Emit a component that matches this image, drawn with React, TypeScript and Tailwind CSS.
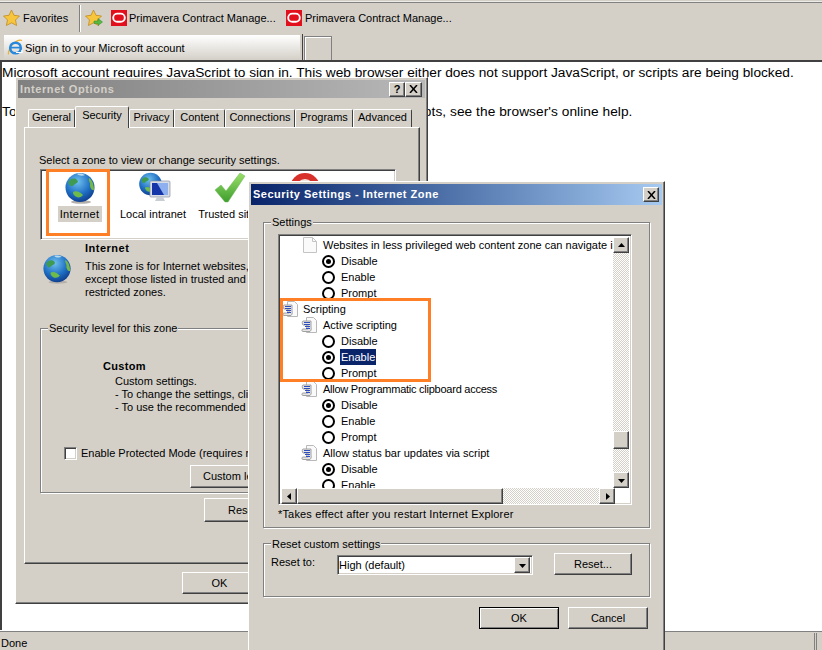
import React from "react";

const raised = "bg-[#d4d0c8] border border-t-white border-l-white border-r-[#404040] border-b-[#404040] shadow-[inset_-1px_-1px_0_#808080]";
const etched = "border border-[#808080] shadow-[1px_1px_0_#fff,inset_1px_1px_0_#fff]";
const sunken = "border border-t-[#808080] border-l-[#808080] border-r-white border-b-white shadow-[inset_1px_1px_0_#404040,inset_-1px_-1px_0_#d4d0c8]";
const hatch = "bg-[repeating-conic-gradient(#d4d0c8_0_25%,#ffffff_0_50%)] bg-[length:2px_2px]";

function Globe({ size = 32 }: { size?: number }) {
  return (
    <svg width={size} height={size} viewBox="0 0 32 32">
      <defs>
        <radialGradient id="glb" cx="0.42" cy="0.3" r="0.8">
          <stop offset="0" stopColor="#6fc0ee" />
          <stop offset="0.55" stopColor="#1f6fc4" />
          <stop offset="1" stopColor="#0b2f7e" />
        </radialGradient>
      </defs>
      <ellipse cx="17" cy="30" rx="10" ry="1.7" fill="#b5b1aa" />
      <circle cx="16" cy="15.5" r="14.5" fill="url(#glb)" />
      <path d="M5 9 C8 6 11 6 13 8 C15 10 13 11 11 12 C9 13 9 15 7 14 C5 13 4 11 5 9Z" fill="#3f9a52" />
      <path d="M9 20 C12 18 16 20 19 23 C17 26 13 26 11 24 C10 23 9 22 9 20Z" fill="#6fbb4a" />
      <path d="M25 6 C28 8 30 12 30 18 C28 19 26 16 26 13 C27 11 24 9 25 6Z" fill="#76b848" />
      <path d="M13 2 C16 1 19 2 21 3 C19 4 15 4 13 2Z" fill="#bcdcee" />
    </svg>
  );
}

function Intranet() {
  return (
    <svg width="34" height="34" viewBox="0 0 34 34">
      <g transform="scale(0.78)"><circle cx="16" cy="15.5" r="14.5" fill="url(#glb)" />
        <path d="M5 9 C8 6 11 6 13 8 C15 10 13 11 11 12 C9 13 9 15 7 14 C5 13 4 11 5 9Z" fill="#3f9a52" />
        <path d="M9 20 C12 18 16 20 19 23 C17 26 13 26 11 24 C10 23 9 22 9 20Z" fill="#6fbb4a" />
      </g>
      <rect x="12" y="9" width="20" height="16" rx="1" fill="#d8dde6" stroke="#8b93a3" strokeWidth="0.7" />
      <rect x="14" y="11" width="16" height="12" fill="#1436a8" />
      <path d="M19 11 H30 V23 H26Z" fill="#8fb0ee" />
      <path d="M19 25 H25 L27 29 H17Z" fill="#c9cdd4" />
    </svg>
  );
}

function Check() {
  return (
    <svg width="32" height="32" viewBox="0 0 32 32">
      <defs>
        <linearGradient id="chk" x1="0" y1="0" x2="0" y2="1">
          <stop offset="0" stopColor="#9be06a" />
          <stop offset="1" stopColor="#3e9e2e" />
        </linearGradient>
      </defs>
      <path d="M1 18 L7 13 L12 19 L26 1 L31 4 L14 30 L11 30Z" fill="url(#chk)" stroke="#6db556" strokeWidth="0.5" />
    </svg>
  );
}

function Restricted() {
  return (
    <svg width="32" height="32" viewBox="0 0 32 32">
      <circle cx="16" cy="16" r="15" fill="#d8302a" />
      <circle cx="16" cy="16" r="9" fill="#f4e6e0" />
    </svg>
  );
}

function Star({ arrow }: { arrow?: boolean }) {
  return (
    <svg width="18" height="18" viewBox="0 0 18 18">
      <path d="M8.5 1 L11 6.3 L16.5 7 L12.5 11 L13.6 16.5 L8.5 13.8 L3.4 16.5 L4.5 11 L.5 7 L6 6.3Z" fill="#f8c63c" stroke="#c08a24" strokeWidth="0.8" />
      {arrow && <path d="M9 12 H13 V9.5 L17.5 13 L13 16.5 V14.5 H9Z" fill="#58b840" stroke="#2f8a2a" strokeWidth="0.5" />}
    </svg>
  );
}

function Oracle() {
  return (
    <svg width="16" height="16" viewBox="0 0 16 16">
      <rect width="16" height="16" fill="#e2101c" />
      <rect x="2.2" y="3.6" width="11.6" height="8.2" rx="4.1" fill="none" stroke="#fff" strokeWidth="1.9" />
    </svg>
  );
}

function IE() {
  return (
    <svg width="17" height="17" viewBox="0 0 17 17">
      <path d="M15 1.5 C12 0 7 3 3 8" fill="none" stroke="#f0b030" strokeWidth="1.3" />
      <path d="M1.5 15.5 C1 13 2 11 3 9" fill="none" stroke="#f0b030" strokeWidth="1.3" />
      <circle cx="8.5" cy="9" r="5.3" fill="none" stroke="#2a88dc" strokeWidth="2.6" />
      <path d="M4 8.6 H13.5" stroke="#2a88dc" strokeWidth="1.7" />
      <path d="M9 13.5 H15 V11" fill="none" stroke="#fff" strokeWidth="1.2" />
    </svg>
  );
}

function Doc() {
  return (
    <svg width="14" height="16" viewBox="0 0 14 16">
      <path d="M.5 .5 H9.5 L13.5 4.5 V15.5 H.5Z" fill="#fafafa" stroke="#c4c4c4" />
      <path d="M9.5 .5 V4.5 H13.5" fill="none" stroke="#c4c4c4" />
    </svg>
  );
}

function ScriptIcon() {
  return (
    <svg width="16" height="16" viewBox="0 0 16 16">
      <path d="M5.5 .5 H12.5 L15.5 3.5 V15.5 H5.5Z" fill="#fafafa" stroke="#b8b8b8" />
      <path d="M2 4 H10 V10 C10 10 11 13 9 14.5 H2 C.5 14.5 .5 12 2 12 H7 V8 H2 C1 7 1 4 2 4Z" fill="#e4e4e4" stroke="#9a9a9a" strokeWidth="0.9" />
      <path d="M3 5.5 H9 M3 7.5 H9 M4 9.5 H9 M5 11.5 H9" stroke="#2f4fc0" strokeWidth="1.1" />
    </svg>
  );
}

function Radio({ on }: { on?: boolean }) {
  return (
    <span className="flex h-[13px] w-[13px] shrink-0 items-center justify-center rounded-full border-2 border-black bg-white">
      {on && <span className="h-[5px] w-[5px] rounded-full bg-black" />}
    </span>
  );
}

function Opt({ label, on, sel }: { label: string; on?: boolean; sel?: boolean }) {
  return (
    <div className="flex h-4 items-center pl-[41px]">
      <Radio on={on} />
      <span className={sel ? "ml-[5px] h-4 w-[36px] bg-[#0a246a] px-[1px] leading-4 text-white" : "ml-[6px]"}>{label}</span>
    </div>
  );
}

function Heading({ label, level, icon, tight }: { label: string; level: number; icon?: "doc"; tight?: boolean }) {
  return (
    <div className={`flex h-4 items-center ${level === 0 ? "pl-[1px]" : "pl-[20px]"}`}>
      <span className="flex w-4 shrink-0 justify-end">{icon === "doc" ? <Doc /> : <ScriptIcon />}</span>
      <span className={`whitespace-nowrap ${level === 0 ? "ml-[5px]" : "ml-[6px]"} ${tight ? "tracking-[-0.25px]" : ""}`}>{label}</span>
    </div>
  );
}

function ArrowBtn({ d }: { d: "up" | "down" | "left" | "right" }) {
  const path = { up: "M1 6 L4.5 2 L8 6Z", down: "M1 3 L4.5 7 L8 3Z", left: "M6 1 L2 4.5 L6 8Z", right: "M3 1 L7 4.5 L3 8Z" }[d];
  return (
    <div className={`${raised} flex h-[16px] w-[16px] shrink-0 items-center justify-center`}>
      <svg width="9" height="9" viewBox="0 0 9 9"><path d={path} fill="#000" /></svg>
    </div>
  );
}

function InternetOptions() {
  const tabs: [string, string][] = [
    ["General", "w-[47px]"], ["Security", "w-[54px]"], ["Privacy", "w-[45px]"], ["Content", "w-[51px]"],
    ["Connections", "w-[70px]"], ["Programs", "w-[58px]"], ["Advanced", "w-[59px]"],
  ];
  return (
    <div className={`absolute left-[15px] top-[77px] h-[527px] w-[413px] p-[2px] ${raised}`}>
      <div className="flex h-[18px] items-center justify-between bg-gradient-to-r from-[#808080] to-[#b8b8b8] pl-[2px] pr-[3px]">
        <span className="font-bold tracking-[0.6px] text-[#d4d0c8]">Internet Options</span>
        <div className="flex">
          <span className={`${raised} flex h-[15px] w-[16px] items-center justify-center font-bold leading-none text-black`}>?</span>
          <span className={`${raised} flex h-[15px] w-[17px] items-center justify-center`}>
            <svg width="9" height="8" viewBox="0 0 9 8"><path d="M1 0 L8 8 M8 0 L1 8" stroke="#000" strokeWidth="1.5" /></svg>
          </span>
        </div>
      </div>
      <div className="ml-[8px] mt-[8px] flex h-[21px] items-end pl-[2px]">
        {tabs.map(([t, w]) => {
          const active = t === "Security";
          return (
            <div key={t} className={`${w} ${active ? "z-10 -mb-px h-[22px] pt-[1px]" : "h-[18px]"} flex shrink-0 justify-center rounded-t-[2px] border-l border-r border-t border-l-white border-r-[#404040] border-t-white bg-[#d4d0c8] leading-[15px]`}>
              {t}
            </div>
          );
        })}
      </div>
      <div className={`ml-[6px] h-[437px] w-[396px] ${raised} pl-[15px] pt-[26px]`}>
        <div className="-ml-px h-[13px] leading-[13px]">Select a zone to view or change security settings.</div>
        <div className={`mt-[2px] flex h-[71px] w-[356px] overflow-hidden bg-white pl-[1px] pt-[2px] ${sunken}`}>
          <div className="flex w-[75px] shrink-0 flex-col items-center"><Globe /><span className="mt-[2px] w-[44px] bg-[#d4d0c8] text-center leading-[16px] tracking-[0.3px] whitespace-nowrap">Internet</span></div>
          <div className="flex w-[75px] shrink-0 flex-col items-center"><Intranet /><span className="-ml-[3px] leading-[16px] whitespace-nowrap">Local intranet</span></div>
          <div className="flex w-[75px] shrink-0 flex-col items-center"><Check /><span className="mt-[2px] leading-[16px] whitespace-nowrap">Trusted sites</span></div>
          <div className="flex w-[75px] shrink-0 flex-col items-center"><Restricted /></div>
        </div>
        <div className="flex">
          <div className="ml-[2px] mt-[14px] shrink-0"><Globe size={30} /></div>
          <div className="ml-[13px] mt-[1px] leading-[13px]">
            <div className="font-bold leading-[14px] tracking-[0.5px]">Internet</div>
            <div className="mt-[5px] whitespace-nowrap">This zone is for Internet websites,</div>
            <div className="whitespace-nowrap">except those listed in trusted and</div>
            <div className="whitespace-nowrap">restricted zones.</div>
          </div>
        </div>
        <div className={`relative mt-[29px] h-[165px] w-[362px] ${etched}`}>
          <span className="absolute -top-[7px] left-[7px] bg-[#d4d0c8] px-[1px] leading-[13px] whitespace-nowrap">Security level for this zone</span>
          <div className="pl-[62px] pt-[31px] leading-[13px]">
            <div className="font-bold tracking-[0.3px]">Custom</div>
            <div className="mt-[2px] pl-[12px]">
              <div className="whitespace-nowrap">Custom settings.</div>
              <div className="whitespace-nowrap">- To change the settings, click Custom level.</div>
              <div className="whitespace-nowrap">- To use the recommended settings, click Default level.</div>
            </div>
          </div>
          <div className="ml-[23px] mt-[31px] flex items-center">
            <span className={`h-[13px] w-[13px] bg-white ${sunken}`} />
            <span className="ml-[4px] whitespace-nowrap">Enable Protected Mode (requires restarting Internet Explorer)</span>
          </div>
          <div className={`${raised} ml-[149px] mt-[3px] flex h-[23px] w-[120px] items-center pl-[12px]`}>Custom level...</div>
        </div>
        <div className={`${raised} ml-[164px] mt-[5px] flex h-[24px] w-[120px] items-center pl-[23px]`}>Reset all zones</div>
      </div>
      <div className={`${raised} ml-[164px] mt-[8px] flex h-[22px] w-[75px] items-center justify-center`}>OK</div>
    </div>
  );
}

function SecuritySettings() {
  return (
    <div className={`absolute left-[248px] top-[181px] h-[480px] w-[417px] p-[2px] ${raised}`}>
      <div className="flex h-[21px] items-center justify-between bg-gradient-to-r from-[#0a246a] to-[#a6caf0] pl-[2px] pr-[3px]">
        <span className="font-bold tracking-[0.5px] text-white">Security Settings - Internet Zone</span>
        <span className={`${raised} flex h-[15px] w-[16px] items-center justify-center`}>
          <svg width="9" height="8" viewBox="0 0 9 8"><path d="M1 0 L8 8 M8 0 L1 8" stroke="#000" strokeWidth="1.5" /></svg>
        </span>
      </div>
      <div className={`relative ml-[12px] mt-[17px] h-[306px] w-[387px] ${etched}`}>
        <span className="absolute -top-[7px] left-[7px] bg-[#d4d0c8] px-[1px] leading-[13px]">Settings</span>
        <div className={`ml-[14px] mt-[11px] h-[271px] w-[354px] bg-white p-[2px] ${sunken}`}>
          <div className="flex h-[251px]">
            <div className="w-[334px] overflow-hidden">
              <div className="w-[334px]">
                <Heading label="Websites in less privileged web content zone can navigate into this zone" level={1} icon="doc" />
                <Opt label="Disable" on /><Opt label="Enable" /><Opt label="Prompt" />
                <Heading label="Scripting" level={0} />
                <Heading label="Active scripting" level={1} />
                <Opt label="Disable" /><Opt label="Enable" on sel /><Opt label="Prompt" />
                <Heading label="Allow Programmatic clipboard access" level={1} tight />
                <Opt label="Disable" on /><Opt label="Enable" /><Opt label="Prompt" />
                <Heading label="Allow status bar updates via script" level={1} />
                <Opt label="Disable" on /><Opt label="Enable" />
              </div>
            </div>
            <div className="flex w-[16px] shrink-0 flex-col">
              <ArrowBtn d="up" />
              <div className={`h-[178px] ${hatch}`} />
              <div className={`${raised} h-[18px]`} />
              <div className={`h-[23px] ${hatch}`} />
              <ArrowBtn d="down" />
            </div>
          </div>
          <div className="flex h-[16px] w-[334px]">
            <ArrowBtn d="left" />
            <div className={`${raised} h-[16px] w-[206px]`} />
            <div className={`h-[16px] w-[96px] ${hatch}`} />
            <ArrowBtn d="right" />
          </div>
        </div>
        <div className="ml-[14px] mt-[3px] leading-[13px] tracking-[0.17px] whitespace-nowrap">*Takes effect after you restart Internet Explorer</div>
      </div>
      <div className={`relative ml-[12px] mt-[15px] h-[54px] w-[387px] ${etched}`}>
        <span className="absolute -top-[6px] left-[7px] bg-[#d4d0c8] px-[1px] leading-[13px] whitespace-nowrap">Reset custom settings</span>
        <div className="flex items-start pl-[7px] pt-[11px]">
          <span className="w-[66px] whitespace-nowrap pt-[1px] leading-[13px]">Reset to:</span>
          <div className={`flex h-[20px] w-[196px] items-center justify-between bg-white pl-[1px] pr-[2px] ${sunken}`}>
            <span>High (default)</span>
            <ArrowBtn d="down" />
          </div>
          <div className={`${raised} -mt-[2px] ml-[21px] flex h-[22px] w-[78px] items-center justify-center`}>Reset...</div>
        </div>
      </div>
      <div className="ml-[228px] mt-[10px] flex gap-[9px]">
        <div className="flex h-[22px] w-[80px] items-center justify-center border border-black bg-[#d4d0c8] shadow-[inset_1px_1px_0_#fff,inset_-1px_-1px_0_#808080]">OK</div>
        <div className={`${raised} flex h-[22px] w-[80px] items-center justify-center`}>Cancel</div>
      </div>
    </div>
  );
}

export default function App() {
  return (
    <div className="relative flex h-[650px] w-[822px] flex-col overflow-hidden bg-[#d4d0c8] font-['Liberation_Sans',sans-serif] text-[11px] text-black">
      <div className="mt-[1px] h-[2px] shrink-0 border-b border-[#808080] bg-white/60" />
      <div className="flex h-[30px] shrink-0 items-center pl-[3px] text-[11px]">
        <Star />
        <span className="ml-[2px] w-[56px]">Favorites</span>
        <span className="h-[27px] w-[2px] border-l border-[#808080] bg-white" />
        <span className="ml-[4px]"><Star arrow /></span>
        <span className="ml-[8px]"><Oracle /></span>
        <span className="ml-[2px] w-[155px] whitespace-nowrap">Primavera Contract Manage...</span>
        <span className="ml-[2px]"><Oracle /></span>
        <span className="ml-[3px] whitespace-nowrap">Primavera Contract Manage...</span>
      </div>
      <div className="flex h-[27px] shrink-0 items-end pl-[3px]">
        <div className="flex h-[26px] w-[298px] items-center border border-b-0 border-[#d4d0c8] bg-gradient-to-b from-white to-[#d4d0c8] pl-[3px] text-[11px]">
          <IE />
          <span className="ml-[1px] pt-[1px] whitespace-nowrap">Sign in to your Microsoft account</span>
        </div>
        <div className="ml-[1px] h-[26px] w-[1px] bg-[#404040]" />
        <div className="ml-[1px] h-[24px] w-[28px] border border-b-0 border-[#808080] shadow-[inset_1px_1px_0_#fff]" />
      </div>
      <div className="h-[570px] shrink-0 border-l-2 border-t-2 border-[#404040] bg-white text-[13.7px] leading-[16px]">
        <div className="mt-[3px] whitespace-nowrap">Microsoft account requires JavaScript to sign in. This web browser either does not support JavaScript, or scripts are being blocked.</div>
        <div className="mt-[23px] tracking-[0.06px] whitespace-nowrap">To find out whether your browser supports JavaScript, or to allow scripts, see the browser's online help.</div>
      </div>
      <div className="h-[1px] shrink-0 bg-white" />
      <div className="flex h-[20px] shrink-0 border-t border-[#808080] pt-[3px]">
        <span className="pl-[1px]">Done</span>
      </div>
      <div className="absolute bottom-0 left-[814px] h-[17px] w-[3px] border-l border-r border-[#808080]" />
      <InternetOptions />
      <SecuritySettings />
      <div className="pointer-events-none absolute left-[46px] top-[169px] h-[67px] w-[64px] border-[3px] border-[#ff7f27]" />
      <div className="pointer-events-none absolute left-[280px] top-[298px] h-[84px] w-[151px] border-[3px] border-[#ff7f27]" />
    </div>
  );
}
